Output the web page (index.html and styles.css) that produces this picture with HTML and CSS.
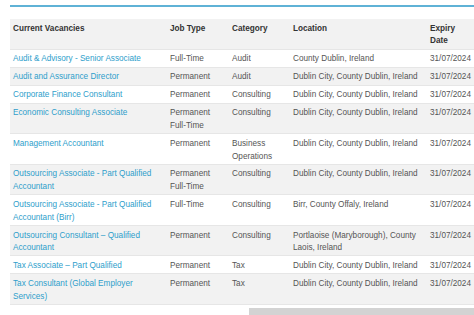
FILE: index.html
```html
<!DOCTYPE html>
<html lang="en">
<head>
<meta charset="utf-8">
<title>Current Vacancies</title>
<link rel="stylesheet" href="styles.css">
</head>
<body>
<div class="page">
  <div class="rule"></div>
  <table class="jobs">
    <colgroup>
      <col class="c-title"><col class="c-type"><col class="c-cat"><col class="c-loc"><col class="c-date">
    </colgroup>
    <thead>
      <tr><th>Current Vacancies</th><th>Job Type</th><th>Category</th><th>Location</th><th>Expiry<br>Date</th></tr>
    </thead>
    <tbody>
      <tr><td><a href="#">Audit &amp; Advisory - Senior Associate</a></td><td>Full-Time</td><td>Audit</td><td>County Dublin, Ireland</td><td>31/07/2024</td></tr>
      <tr><td><a href="#">Audit and Assurance Director</a></td><td>Permanent</td><td>Audit</td><td>Dublin City, County Dublin, Ireland</td><td>31/07/2024</td></tr>
      <tr><td><a href="#">Corporate Finance Consultant</a></td><td>Permanent</td><td>Consulting</td><td>Dublin City, County Dublin, Ireland</td><td>31/07/2024</td></tr>
      <tr><td><a href="#">Economic Consulting Associate</a></td><td>Permanent<br>Full-Time</td><td>Consulting</td><td>Dublin City, County Dublin, Ireland</td><td>31/07/2024</td></tr>
      <tr><td><a href="#">Management Accountant</a></td><td>Permanent</td><td>Business Operations</td><td>Dublin City, County Dublin, Ireland</td><td>31/07/2024</td></tr>
      <tr><td><a href="#">Outsourcing Associate - Part Qualified Accountant</a></td><td>Permanent<br>Full-Time</td><td>Consulting</td><td>Dublin City, County Dublin, Ireland</td><td>31/07/2024</td></tr>
      <tr><td><a href="#">Outsourcing Associate - Part Qualified Accountant (Birr)</a></td><td>Full-Time</td><td>Consulting</td><td>Birr, County Offaly, Ireland</td><td>31/07/2024</td></tr>
      <tr><td><a href="#">Outsourcing Consultant – Qualified Accountant</a></td><td>Permanent</td><td>Consulting</td><td>Portlaoise (Maryborough), County Laois, Ireland</td><td>31/07/2024</td></tr>
      <tr><td><a href="#">Tax Associate – Part Qualified</a></td><td>Permanent</td><td>Tax</td><td>Dublin City, County Dublin, Ireland</td><td>31/07/2024</td></tr>
      <tr><td><a href="#">Tax Consultant (Global Employer Services)</a></td><td>Permanent</td><td>Tax</td><td>Dublin City, County Dublin, Ireland</td><td>31/07/2024</td></tr>
    </tbody>
  </table>
  <div class="scroll"><div class="thumb"></div></div>
</div>
</body>
</html>
```
FILE: styles.css
```css
html, body {
  margin: 0;
  padding: 0;
  background: #fff;
  overflow: hidden;
}
.page {
  padding: 5px 0 0 10px;
  font-family: "Liberation Sans", Arial, sans-serif;
  font-size: 8.2px;
  color: #555;
}
.rule {
  height: 2px;
  background: #5fb2d6;
}
.jobs {
  margin-top: 12px;
  width: 464px;
  border-collapse: collapse;
  table-layout: fixed;
}
.c-title { width: 157px; }
.c-type { width: 62px; }
.c-cat { width: 61px; }
.c-loc { width: 137px; }
.c-date { width: 47px; }
.jobs th, .jobs td {
  text-align: left;
  vertical-align: top;
  line-height: 12.6px;
  padding: 3.8px 3px 0.6px 3px;
}
.jobs th {
  font-weight: bold;
  color: #333;
  background: #f2f2f2;
}
.jobs tbody tr {
  border-top: 1px solid #e6e6e6;
}
.jobs tbody tr:nth-child(even) {
  background: #f2f2f2;
}
.jobs tbody tr:last-child {
  border-bottom: 1px solid #e6e6e6;
}
.jobs a {
  color: #2e9ecb;
  text-decoration: none;
}
.scroll {
  display: flex;
  margin-top: 3px;
  height: 10px;
}
.thumb {
  margin-left: 239px;
  flex: 1;
  background: #d3d3d3;
}
```
